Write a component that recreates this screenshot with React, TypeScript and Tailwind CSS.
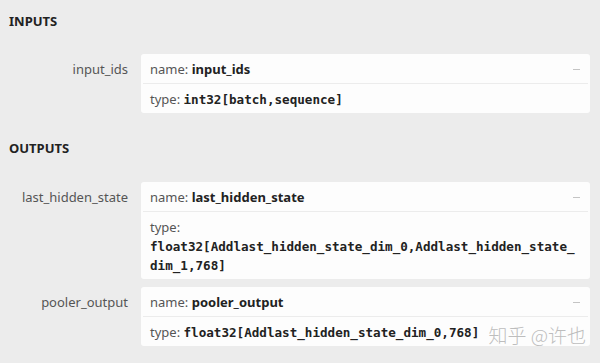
const sans = { fontFamily: '"Noto Sans", "Open Sans", sans-serif' };

type Field = { label: string; name: string; type: string };

const inputs: Field[] = [{ label: "input_ids", name: "input_ids", type: "int32[batch,sequence]" }];
const outputs: Field[] = [
  {
    label: "last_hidden_state",
    name: "last_hidden_state",
    type: "float32[Addlast_hidden_state_dim_0,Addlast_hidden_state_dim_1,768]",
  },
  { label: "pooler_output", name: "pooler_output", type: "float32[Addlast_hidden_state_dim_0,768]" },
];

function FieldRow({ field }: { field: Field }) {
  return (
    <div className="flex items-start">
      <div className="w-[128px] shrink-0 pt-[6px] text-right text-[13px] leading-[19px] text-[#555]">
        {field.label}
      </div>
      <div className="ml-[13px] mr-[10px] min-w-0 flex-1 rounded-[3px] bg-[#fdfdfd]">
        <div className="flex items-center justify-between px-[9px] pt-[6px] pb-[4px] text-[13px] leading-[19px]">
          <span className="text-[#555]">
            name: <b className="font-bold text-[#222]">{field.name}</b>
          </span>
          <span className="mr-[1px] h-px w-[7px] bg-[#c4c4c4]" />
        </div>
        <div className="mx-[2px] h-px bg-[#ececec]" />
        <div className="px-[9px] pt-[6px] pb-[4px] text-[13px] leading-[19px] text-[#555] [overflow-wrap:break-word]">
          type:{" "}
          <code className="font-['DejaVu_Sans_Mono',monospace] text-[12.6px] font-bold text-[#222]">
            {field.type}
          </code>
        </div>
      </div>
    </div>
  );
}

export default function App() {
  return (
    <div className="relative h-[363px] w-[600px] overflow-hidden bg-[#ececec] pt-[12px]" style={sans}>
      <h2 className="pl-[9px] text-[13px] font-bold leading-[18px] text-[#222]">INPUTS</h2>
      <div className="mt-[24px] flex flex-col gap-[8px]">
        {inputs.map((f) => (
          <FieldRow key={f.name} field={f} />
        ))}
      </div>
      <h2 className="mt-[26px] pl-[9px] text-[13px] font-bold leading-[18px] text-[#222]">OUTPUTS</h2>
      <div className="mt-[25px] flex flex-col gap-[8px]">
        {outputs.map((f) => (
          <FieldRow key={f.name} field={f} />
        ))}
      </div>
      <div className="absolute right-[14px] top-[322px] font-['Noto_Sans_CJK_SC',sans-serif] text-[19px] font-light leading-[26px] text-[#bdbdbd]">
        知乎 @许也
      </div>
    </div>
  );
}
